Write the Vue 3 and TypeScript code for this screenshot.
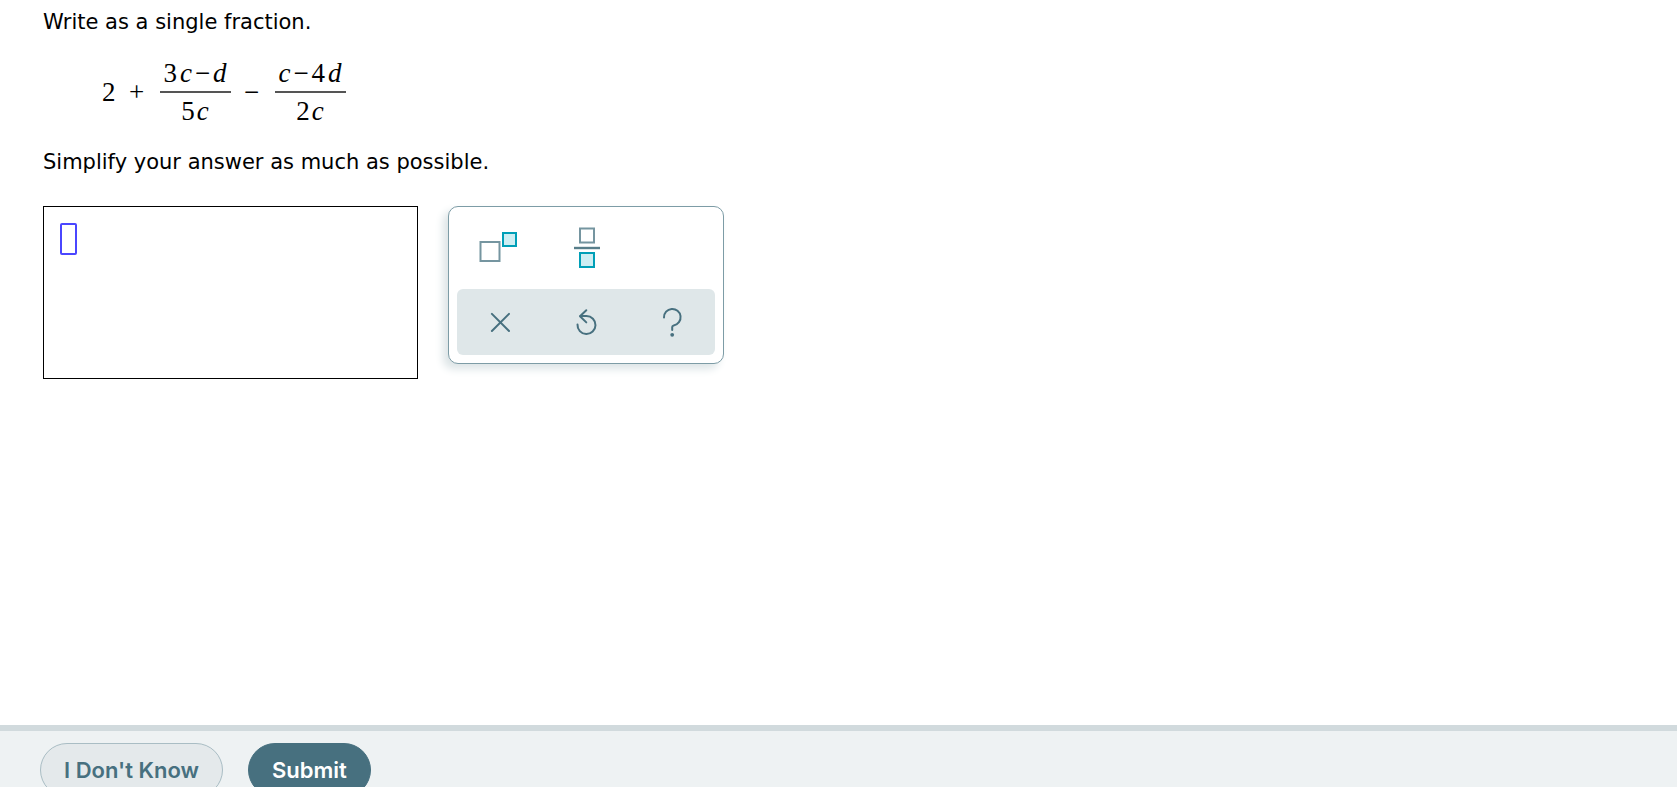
<script setup lang="ts">
import { ref } from 'vue'

interface Token {
  text: string
  kind: 'num' | 'var' | 'op'
}

interface Fraction {
  sign: string
  top: Token[]
  bottom: Token[]
}

const fractions: Fraction[] = [
  {
    sign: '+',
    top: [
      { text: '3', kind: 'num' },
      { text: 'c', kind: 'var' },
      { text: '−', kind: 'op' },
      { text: 'd', kind: 'var' },
    ],
    bottom: [
      { text: '5', kind: 'num' },
      { text: 'c', kind: 'var' },
    ],
  },
  {
    sign: '−',
    top: [
      { text: 'c', kind: 'var' },
      { text: '−', kind: 'op' },
      { text: '4', kind: 'num' },
      { text: 'd', kind: 'var' },
    ],
    bottom: [
      { text: '2', kind: 'num' },
      { text: 'c', kind: 'var' },
    ],
  },
]

const answer = ref('')
</script>

<template>
  <div class="page">
    <main class="question">
      <p class="line">Write as a single fraction.</p>
      <div class="expression">
        <span class="whole">2</span>
        <template v-for="(f, i) in fractions" :key="i">
          <span class="sign">{{ f.sign }}</span>
          <span class="fraction">
            <span class="row top">
              <span v-for="(t, j) in f.top" :key="j" :class="t.kind">{{ t.text }}</span>
            </span>
            <span class="row bottom">
              <span v-for="(t, j) in f.bottom" :key="j" :class="t.kind">{{ t.text }}</span>
            </span>
          </span>
        </template>
      </div>
      <p class="line">Simplify your answer as much as possible.</p>

      <div class="work">
        <div class="answer">
          <input v-model="answer" class="slot" type="text" aria-label="Answer" />
        </div>
        <div class="palette">
          <div class="tools">
            <button type="button" class="tool" aria-label="Exponent">
              <svg width="44" height="44" viewBox="0 0 44 44">
                <rect x="2.500" y="15" width="19" height="19" fill="#fff" stroke="#7595a0" stroke-width="2" />
                <rect x="25" y="6" width="13" height="13" fill="#cdeef3" stroke="#009fb7" stroke-width="2" />
              </svg>
            </button>
            <button type="button" class="tool" aria-label="Fraction">
              <svg width="44" height="44" viewBox="0 0 44 44">
                <rect x="16" y="1.500" width="14" height="14" fill="#fff" stroke="#7595a0" stroke-width="2" />
                <path d="M10 21H36" fill="none" stroke="#587e8a" stroke-width="2.4" />
                <rect x="16" y="26" width="14" height="14" fill="#cdeef3" stroke="#009fb7" stroke-width="2" />
              </svg>
            </button>
          </div>
          <div class="actions">
            <button type="button" class="tool" aria-label="Clear">
              <svg width="32" height="32" viewBox="0 0 32 32" class="glyph">
                <path d="M7.9 7.9 25 25M25 7.900 7.900 25" />
              </svg>
            </button>
            <button type="button" class="tool" aria-label="Undo">
              <svg width="32" height="32" viewBox="0 0 32 32" class="glyph">
                <path d="M7.500 18.500a9 9 0 1 0 9-8.500H10M16.300 4.200 10 10.200 16.300 16.400" />
              </svg>
            </button>
            <button type="button" class="tool" aria-label="Help">
              <svg width="32" height="32" viewBox="0 0 32 32" class="glyph">
                <path d="M8 11.500a8.300 8.300 0 1 1 9.700 7.900q-1.500.3-1.500 1.600v3" />
                <circle cx="16.200" cy="28.800" r="1.900" class="dot" />
              </svg>
            </button>
          </div>
        </div>
      </div>
    </main>

    <footer class="bar">
      <button type="button" class="btn skip">I Don't Know</button>
      <button type="button" class="btn submit">Submit</button>
    </footer>
  </div>
</template>

<style>
body {
  margin: 0;
  background: #fff;
}
</style>

<style scoped>
.page {
  display: flex;
  flex-direction: column;
  height: 100vh;
  overflow: hidden;
  box-sizing: border-box;
  color: #000;
}

.question {
  flex: 1;
  min-height: 0;
  padding: 8px 43px 0;
}

.line {
  margin: 0;
  font: 21px/28px Verdana, 'DejaVu Sans', sans-serif;
}

.expression {
  display: flex;
  align-items: center;
  margin: 20px 0 20px 59px;
  height: 72px;
  font: 27px/36px 'Liberation Serif', 'Times New Roman', serif;
}

.sign {
  width: 16px;
  margin: 0 15px 0 13px;
  text-align: center;
}

.fraction {
  display: flex;
  flex-direction: column;
  min-width: 71px;
}

.row {
  display: flex;
  justify-content: center;
  gap: 3px;
}

.top {
  border-bottom: 2px solid #555;
}

.bottom {
  gap: 2px;
}

.var {
  font-style: italic;
}

.work {
  display: flex;
  align-items: flex-start;
  gap: 30px;
  margin-top: 30px;
}

.answer {
  box-sizing: border-box;
  width: 375px;
  height: 173px;
  padding: 16px;
  border: 1px solid #000;
}

.slot {
  display: block;
  box-sizing: border-box;
  width: 17px;
  height: 32px;
  padding: 0;
  border: 2px solid #4a46ff;
  border-radius: 2px;
  background: #fff;
  font: 20px 'Liberation Serif', serif;
  outline: none;
}

.palette {
  box-sizing: border-box;
  width: 276px;
  padding: 8px;
  border: 1px solid #7d9ca6;
  border-radius: 10px;
  background: #fff;
  box-shadow: -5px 5px 8px #dce4e6;
}

.tools,
.actions {
  display: grid;
  grid-template-columns: repeat(3, 1fr);
}

.tools {
  height: 68px;
  padding-bottom: 6px;
}

.actions {
  height: 66px;
  border-radius: 6px;
  background: #dfe7e9;
}

.tool {
  display: flex;
  align-items: center;
  justify-content: center;
  padding: 0;
  border: 0;
  background: none;
}

.tool svg {
  display: block;
}

.glyph {
  fill: none;
  stroke: #47707f;
  stroke-width: 2;
  stroke-linecap: round;
  stroke-linejoin: round;
}

.dot {
  fill: #47707f;
  stroke: none;
}

.bar {
  display: flex;
  flex: none;
  gap: 25px;
  box-sizing: border-box;
  height: 62px;
  padding: 12px 40px 0;
  border-top: 6px solid #d1dadd;
  background: #eef2f3;
}

.btn {
  flex: none;
  box-sizing: border-box;
  height: 54px;
  padding: 0 23px;
  border: 1px solid #a9bdc4;
  border-radius: 27px;
  font: 600 22px/28px Inter, Roboto, sans-serif;
}

.skip {
  background: #e4e9eb;
  color: #47707f;
}

.submit {
  border-color: #47707f;
  background: #47707f;
  color: #fff;
}
</style>
